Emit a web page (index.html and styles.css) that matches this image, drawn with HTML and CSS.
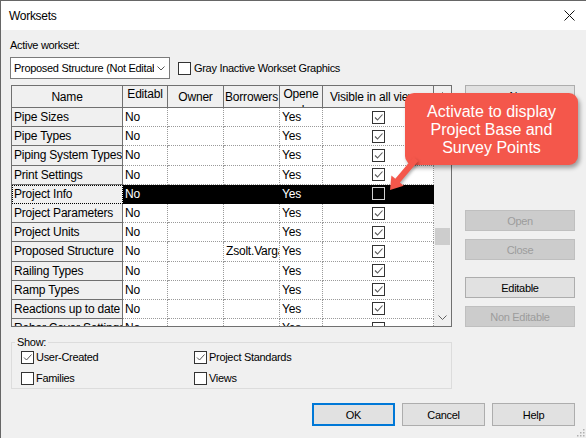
FILE: index.html
```html
<!DOCTYPE html>
<html>
<head>
<meta charset="utf-8">
<link rel="stylesheet" href="styles.css">
</head>
<body>
<div class="window">
  <div class="titlebar">
    <span class="title">Worksets</span>
    <svg class="close" viewBox="0 0 11 11"><path d="M0.5 0.5L10.5 10.5M10.5 0.5L0.5 10.5" stroke="#111" stroke-width="1" fill="none"/></svg>
  </div>
  <div class="content">
    <div class="label">Active workset:</div>
    <div class="toprow">
      <div class="select">
        <span class="select-text">Proposed Structure (Not Editable)</span>
        <svg class="chev" viewBox="0 0 8 5"><path d="M0.5 0.5L4 4L7.5 0.5" stroke="#555" fill="none"/></svg>
      </div>
      <div class="chk"><span class="box"></span><span>Gray Inactive Workset Graphics</span></div>
    </div>
    <div class="main">
      <div class="list">
        <div class="grid">
          <div class="row head">
            <div class="cell name">Name</div>
            <div class="cell top">Editabl<br>e</div>
            <div class="cell">Owner</div>
            <div class="cell">Borrowers</div>
            <div class="cell top">Opene<br>d</div>
            <div class="cell wide">Visible in all views</div>
          </div>
          <div class="row"><div class="cell name">Pipe Sizes</div><div class="cell">No</div><div class="cell"></div><div class="cell"></div><div class="cell">Yes</div><div class="cell vis"><span class="cb on"><svg viewBox="0 0 11 11"><path d="M2 5.5L4.5 8L9.5 2.5" stroke="#5a5a5a" stroke-width="1.1" fill="none"/></svg></span></div></div>
          <div class="row"><div class="cell name">Pipe Types</div><div class="cell">No</div><div class="cell"></div><div class="cell"></div><div class="cell">Yes</div><div class="cell vis"><span class="cb on"><svg viewBox="0 0 11 11"><path d="M2 5.5L4.5 8L9.5 2.5" stroke="#5a5a5a" stroke-width="1.1" fill="none"/></svg></span></div></div>
          <div class="row"><div class="cell name">Piping System Types</div><div class="cell">No</div><div class="cell"></div><div class="cell"></div><div class="cell">Yes</div><div class="cell vis"><span class="cb on"><svg viewBox="0 0 11 11"><path d="M2 5.5L4.5 8L9.5 2.5" stroke="#5a5a5a" stroke-width="1.1" fill="none"/></svg></span></div></div>
          <div class="row"><div class="cell name">Print Settings</div><div class="cell">No</div><div class="cell"></div><div class="cell"></div><div class="cell">Yes</div><div class="cell vis"><span class="cb on"><svg viewBox="0 0 11 11"><path d="M2 5.5L4.5 8L9.5 2.5" stroke="#5a5a5a" stroke-width="1.1" fill="none"/></svg></span></div></div>
          <div class="row sel"><div class="cell name">Project Info</div><div class="cell">No</div><div class="cell"></div><div class="cell"></div><div class="cell">Yes</div><div class="cell vis"><span class="cb"></span></div></div>
          <div class="row"><div class="cell name">Project Parameters</div><div class="cell">No</div><div class="cell"></div><div class="cell"></div><div class="cell">Yes</div><div class="cell vis"><span class="cb on"><svg viewBox="0 0 11 11"><path d="M2 5.5L4.5 8L9.5 2.5" stroke="#5a5a5a" stroke-width="1.1" fill="none"/></svg></span></div></div>
          <div class="row"><div class="cell name">Project Units</div><div class="cell">No</div><div class="cell"></div><div class="cell"></div><div class="cell">Yes</div><div class="cell vis"><span class="cb on"><svg viewBox="0 0 11 11"><path d="M2 5.5L4.5 8L9.5 2.5" stroke="#5a5a5a" stroke-width="1.1" fill="none"/></svg></span></div></div>
          <div class="row"><div class="cell name">Proposed Structure</div><div class="cell">No</div><div class="cell"></div><div class="cell">Zsolt.Varga</div><div class="cell">Yes</div><div class="cell vis"><span class="cb on"><svg viewBox="0 0 11 11"><path d="M2 5.5L4.5 8L9.5 2.5" stroke="#5a5a5a" stroke-width="1.1" fill="none"/></svg></span></div></div>
          <div class="row"><div class="cell name">Railing Types</div><div class="cell">No</div><div class="cell"></div><div class="cell"></div><div class="cell">Yes</div><div class="cell vis"><span class="cb on"><svg viewBox="0 0 11 11"><path d="M2 5.5L4.5 8L9.5 2.5" stroke="#5a5a5a" stroke-width="1.1" fill="none"/></svg></span></div></div>
          <div class="row"><div class="cell name">Ramp Types</div><div class="cell">No</div><div class="cell"></div><div class="cell"></div><div class="cell">Yes</div><div class="cell vis"><span class="cb on"><svg viewBox="0 0 11 11"><path d="M2 5.5L4.5 8L9.5 2.5" stroke="#5a5a5a" stroke-width="1.1" fill="none"/></svg></span></div></div>
          <div class="row"><div class="cell name">Reactions up to date</div><div class="cell">No</div><div class="cell"></div><div class="cell"></div><div class="cell">Yes</div><div class="cell vis"><span class="cb on"><svg viewBox="0 0 11 11"><path d="M2 5.5L4.5 8L9.5 2.5" stroke="#5a5a5a" stroke-width="1.1" fill="none"/></svg></span></div></div>
          <div class="row"><div class="cell name">Rebar Cover Settings</div><div class="cell">No</div><div class="cell"></div><div class="cell"></div><div class="cell">Yes</div><div class="cell vis"><span class="cb"></span></div></div>
        </div>
        <div class="scroll">
          <div class="sb-btn"><svg viewBox="0 0 9 5"><path d="M0.5 4.5L4.5 0.5L8.5 4.5" stroke="#606060" fill="none"/></svg></div>
          <div class="sb-track"><div class="thumb"></div></div>
          <div class="sb-btn"><svg viewBox="0 0 9 5"><path d="M0.5 0.5L4.5 4.5L8.5 0.5" stroke="#606060" fill="none"/></svg></div>
        </div>
      </div>
      <div class="side">
        <div class="btn">New</div>
        <div class="btn dis b-open">Open</div>
        <div class="btn dis b-close">Close</div>
        <div class="btn b-edit">Editable</div>
        <div class="btn dis b-nonedit">Non Editable</div>
      </div>
    </div>
    <fieldset class="show">
      <legend>Show:</legend>
      <div class="opts">
        <div class="opt"><span class="box"><svg viewBox="0 0 11 11"><path d="M2 5.5L4.5 8L9.5 2.5" stroke="#555" fill="none"/></svg></span><span>User-Created</span></div>
        <div class="opt"><span class="box"><svg viewBox="0 0 11 11"><path d="M2 5.5L4.5 8L9.5 2.5" stroke="#555" fill="none"/></svg></span><span>Project Standards</span></div>
        <div class="opt"><span class="box"></span><span>Families</span></div>
        <div class="opt"><span class="box"></span><span>Views</span></div>
      </div>
    </fieldset>
    <div class="actions">
      <div class="abtn ok">OK</div>
      <div class="abtn">Cancel</div>
      <div class="abtn">Help</div>
    </div>
  </div>
</div>
<div class="callout">Activate to display<br>Project Base and<br>Survey Points</div>
<svg class="arrow" viewBox="380 150 50 50"><polygon points="418.3,160.9 399.9,182.6 403.8,185.8 390,190 391.4,175.6 395.3,178.8 413.7,157.1" fill="#f4574b"/></svg>
<svg class="grip" viewBox="0 0 8 8"><g fill="#b0b0b0"><rect x="6" y="0" width="1.5" height="1.5"/><rect x="3" y="3" width="1.5" height="1.5"/><rect x="6" y="3" width="1.5" height="1.5"/><rect x="0" y="6" width="1.5" height="1.5"/><rect x="3" y="6" width="1.5" height="1.5"/><rect x="6" y="6" width="1.5" height="1.5"/></g></svg>
</body>
</html>
```
FILE: styles.css
```css
* { box-sizing: border-box; }
body {
  margin: 0;
  width: 586px;
  height: 438px;
  overflow: hidden;
  position: relative;
  background: #f0f0f0;
  font-family: "Liberation Sans", Arial, sans-serif;
  font-size: 11px;
  letter-spacing: -0.3px;
  color: #000;
}
.window {
  height: 438px;
  border-top: 1px solid #666;
  border-left: 1px solid #666;
  display: flex;
  flex-direction: column;
}
.titlebar {
  height: 29px;
  flex: none;
  background: #fff;
  display: flex;
  align-items: center;
  justify-content: space-between;
  padding: 0 11px 0 8px;
}
.title { font-size: 12px; }
.close { width: 11px; height: 11px; display: block; }
.content {
  flex: 1;
  padding: 0 11px 0 9px;
  display: flex;
  flex-direction: column;
}
.label { margin-top: 8px; line-height: 14px; }
.toprow {
  margin-top: 5px;
  display: flex;
  align-items: center;
  gap: 8px;
}
.select {
  width: 160px;
  height: 22px;
  background: #fff;
  border: 1px solid #7a7a7a;
  display: flex;
  align-items: center;
  padding: 0 4px 0 3px;
}
.select-text { flex: 1; overflow: hidden; white-space: nowrap; }
.chev { width: 8px; height: 5px; margin-left: 3px; flex: none; }
.chk { display: flex; align-items: center; gap: 3px; }
.box {
  width: 13px;
  height: 13px;
  border: 1px solid #333;
  background: #fff;
  flex: none;
  display: flex;
}
.box svg { width: 11px; height: 11px; }
.main { margin-top: 6px; display: flex; gap: 13px; }
.list {
  margin-left: 1px;
  width: 441px;
  height: 242px;
  border: 1px solid #707070;
  background: #fff;
  display: flex;
}
.grid { width: 422px; flex: none; overflow: hidden; }
.row {
  display: grid;
  grid-template-columns: 111px 45px 56px 56px 43px 111px;
  height: 19.2px;
}
.cell {
  border-right: 1px dotted #9a9a9a;
  border-bottom: 1px dotted #9a9a9a;
  padding-left: 2px;
  white-space: nowrap;
  overflow: hidden;
  line-height: 18px;
  font-size: 12px;
  letter-spacing: -0.2px;
  background: #fff;
}
.cell.name {
  background: #f0f0f0;
  border-right: 1px solid #707070;
  border-bottom: 1px solid #707070;
}
.head { height: 22px; }
.head .cell {
  background: #f0f0f0;
  border-right: 1px solid #707070;
  border-bottom: 1px solid #707070;
  text-align: center;
  line-height: 22px;
  padding: 0;
}
.head .cell.top { line-height: 16px; padding-top: 0; white-space: normal; }
.head .cell.wide { text-align: left; padding-left: 7px; }
.row.sel .cell { background: #000; color: #fff; border-color: #000; }
.row.sel .cell.name {
  background: #f0f0f0;
  color: #000;
  border: 1px dotted #000;
  padding-left: 1px;
  line-height: 16px;
}
.cell.vis { display: flex; justify-content: center; align-items: center; padding: 0; }
.cb {
  width: 13px;
  height: 13px;
  border: 1px solid #333;
  background: #fff;
  display: flex;
}
.cb svg { width: 11px; height: 11px; }
.row.sel .cb { background: #000; border-color: #d0d0d0; }
.scroll {
  flex: 1;
  background: #f0f0f0;
  display: flex;
  flex-direction: column;
  align-items: center;
}
.sb-btn {
  height: 17px;
  width: 100%;
  display: flex;
  align-items: center;
  justify-content: center;
}
.sb-btn svg { width: 9px; height: 5px; }
.sb-track { flex: 1; width: 100%; display: flex; justify-content: center; }
.thumb { margin-top: 125px; width: 15px; height: 17px; background: #cdcdcd; }
.side { width: 110px; display: flex; flex-direction: column; }
.btn {
  height: 21px;
  border: 1px solid #adadad;
  background: #e1e1e1;
  display: flex;
  align-items: center;
  justify-content: center;
}
.btn.dis { background: #cccccc; border-color: #bfbfbf; color: #9c9c9c; }
.b-open { margin-top: 104px; }
.b-close { margin-top: 8px; }
.b-edit { margin-top: 17px; }
.b-nonedit { margin-top: 8px; }
.show {
  margin: 9px 0 0 1px;
  padding: 2px 0 3px 9px;
  border: 1px solid #dcdcdc;
  width: 441px;
  min-width: 0;
}
.show legend { padding: 0 2px; margin-left: -6px; line-height: 13px; }
.opts {
  display: grid;
  grid-template-columns: 173px auto;
  row-gap: 8px;
}
.opt { display: flex; align-items: center; gap: 2px; height: 13px; line-height: 13px; }
.actions {
  margin-top: 14px;
  display: flex;
  justify-content: flex-end;
  gap: 7px;
}
.abtn {
  width: 83px;
  height: 23px;
  border: 1px solid #adadad;
  background: #e1e1e1;
  display: flex;
  align-items: center;
  justify-content: center;
}
.abtn.ok { border-color: #0078d7; box-shadow: inset 0 0 0 1px #0078d7; }
.callout {
  position: absolute;
  left: 405px;
  top: 93px;
  width: 173px;
  height: 72px;
  border-radius: 9px;
  background: #f4574b;
  color: #fff;
  font-size: 16px;
  letter-spacing: 0;
  line-height: 18px;
  text-align: center;
  padding-top: 10px;
  box-shadow: 2px 3px 4px rgba(0, 0, 0, 0.35);
}
.arrow {
  position: absolute;
  left: 380px;
  top: 150px;
  width: 50px;
  height: 50px;
  filter: drop-shadow(1px 2px 1.5px rgba(0, 0, 0, 0.3));
}
.grip { position: absolute; left: 577px; top: 429px; width: 8px; height: 8px; }
```
